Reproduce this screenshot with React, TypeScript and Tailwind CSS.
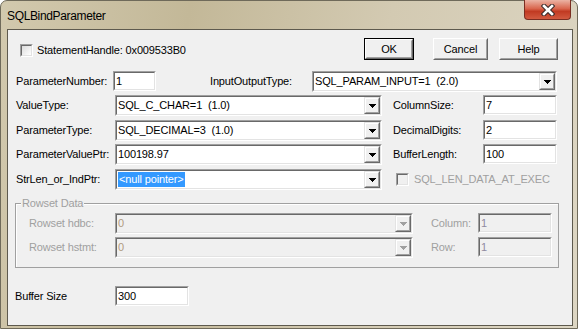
import React from "react";

const sunkenOuter = "border border-t-[#a0a0a0] border-l-[#a0a0a0] border-b-white border-r-white";
const sunkenInner = "border border-t-[#696969] border-l-[#696969] border-b-[#e3e3e3] border-r-[#e3e3e3]";

function Arrow(props: { disabled?: boolean }) {
  return (
    <svg width="7" height="4" viewBox="0 0 7 4" shapeRendering="crispEdges">
      <path d="M0 0h7v1H0zM1 1h5v1H1zM2 2h3v1H2zM3 3h1v1H3z" fill={props.disabled ? "#a0a0a0" : "#000"} />
    </svg>
  );
}

function Edit(props: { className: string; value: string; disabled?: boolean }) {
  return (
    <div className={`${props.className} shrink-0 ${sunkenOuter}`}>
      <div
        className={[
          "h-full flex items-center pl-[1px] whitespace-pre",
          sunkenInner,
          props.disabled ? "bg-[#f0f0f0] text-[#8f8ba0]" : "bg-white"
        ].join(" ")}
      >
        {props.value}
      </div>
    </div>
  );
}

function Combo(props: { className: string; value: string; disabled?: boolean; selected?: boolean }) {
  return (
    <div className={`${props.className} shrink-0 ${sunkenOuter}`}>
      <div className={`h-full flex ${sunkenInner} ${props.disabled ? "bg-[#f0f0f0]" : "bg-white"}`}>
        <div className={`flex-1 flex items-center pl-[1px] whitespace-pre ${props.disabled ? "text-[#b09a80]" : ""}`}>
          {props.selected ? (
            <span className="bg-[#3399ff] text-white h-[15px] leading-[15px] px-[1px]">{props.value}</span>
          ) : (
            props.value
          )}
        </div>
        <div className="w-[16px] h-full border border-t-[#e3e3e3] border-l-[#e3e3e3] border-b-[#696969] border-r-[#696969]">
          <div className="h-full flex items-center justify-center bg-[#f0f0f0] border border-t-white border-l-white border-b-[#a0a0a0] border-r-[#a0a0a0]">
            <Arrow disabled={props.disabled} />
          </div>
        </div>
      </div>
    </div>
  );
}

function CheckBox(props: { disabled?: boolean }) {
  return (
    <div className={`w-[13px] h-[13px] shrink-0 ${sunkenOuter}`}>
      <div className={`h-full ${sunkenInner} ${props.disabled ? "bg-[#f0f0f0]" : "bg-[linear-gradient(135deg,#dcdcdc,#fff)]"}`} />
    </div>
  );
}

function Button(props: { className: string; label: string; isDefault?: boolean }) {
  return (
    <div className={`${props.className} h-[22px] ${props.isDefault ? "border border-black" : ""}`}>
      <div className="h-full border border-t-white border-l-white border-b-[#696969] border-r-[#696969]">
        <div className="h-full flex items-center justify-center bg-[#f0f0f0] border border-t-[#f0f0f0] border-l-[#f0f0f0] border-b-[#a0a0a0] border-r-[#a0a0a0]">
          {props.label}
        </div>
      </div>
    </div>
  );
}

function CloseGlyph() {
  return (
    <svg width="14" height="12" viewBox="0 0 14 12">
      <path d="M3 2L11 10M11 2L3 10" stroke="#3b2b2a" strokeWidth="4.6" strokeLinecap="square" />
      <path d="M3 2L11 10M11 2L3 10" stroke="#ffffff" strokeWidth="2.6" strokeLinecap="square" />
    </svg>
  );
}

export default function App() {
  return (
    <div className="w-[578px] h-[329px] overflow-hidden font-['Liberation_Sans',Arial,sans-serif] text-[11px] tracking-[-0.15px] text-black">
      <div className="w-[578px] h-[329px] rounded-t-[7px] border border-[#6f6a5a] bg-[linear-gradient(100deg,#d2c9ae,#c3b898_30%,#d3cab2_62%,#ddd6c3)]">
        {/* title bar */}
        <div className="flex h-[28px]">
          <div className="pl-[6px] pt-[8px] text-[12px] tracking-[-0.35px] leading-[15px]">SQLBindParameter</div>
          <div className="ml-auto mr-[6px] -mt-px w-[47px] h-[20px] rounded-b-[4px] border border-t-0 border-[#7a2e22] bg-[linear-gradient(#ebb3a4,#d9664e_45%,#c13a22_60%,#d25a40)] flex items-center justify-center">
            <CloseGlyph />
          </div>
        </div>

        {/* client area */}
        <div className="ml-[6px] w-[566px] h-[297px] border border-[#5e5a4e] bg-[#f0f0f0]">
          <div className="flex pt-[8px]">
            <div className="flex items-center mt-[6px] ml-[12px] h-[13px]">
              <CheckBox />
              <span className="ml-[4px]">StatementHandle: 0x009533B0</span>
            </div>
            <div className="ml-auto mr-[14px] flex">
              <Button className="w-[50px]" label="OK" isDefault />
              <Button className="ml-[19px] w-[55px]" label="Cancel" />
              <Button className="ml-[11px] w-[59px]" label="Help" />
            </div>
          </div>

          <div className="flex items-start mt-[11px] ml-[8px] h-[21px]">
            <div className="w-[97px] h-[20px] flex items-center">ParameterNumber:</div>
            <Edit className="w-[43px] h-[20px]" value="1" />
            <div className="ml-[54px] w-[102px] h-[21px] flex items-center">InputOutputType:</div>
            <Combo className="w-[245px] h-[21px]" value="SQL_PARAM_INPUT=1  (2.0)" />
          </div>

          <div className="flex items-start mt-[3px] ml-[8px] h-[21px]">
            <div className="w-[99px] h-[21px] flex items-center">ValueType:</div>
            <Combo className="w-[267px] h-[21px]" value="SQL_C_CHAR=1  (1.0)" />
            <div className="ml-[11px] w-[90px] h-[20px] flex items-center">ColumnSize:</div>
            <Edit className="w-[74px] h-[20px]" value="7" />
          </div>

          <div className="flex items-start mt-[4px] ml-[8px] h-[21px]">
            <div className="w-[99px] h-[21px] flex items-center">ParameterType:</div>
            <Combo className="w-[267px] h-[21px]" value="SQL_DECIMAL=3  (1.0)" />
            <div className="ml-[11px] w-[90px] h-[20px] flex items-center">DecimalDigits:</div>
            <Edit className="w-[74px] h-[20px]" value="2" />
          </div>

          <div className="flex items-start mt-[3px] ml-[8px] h-[21px]">
            <div className="w-[99px] h-[21px] flex items-center">ParameterValuePtr:</div>
            <Combo className="w-[267px] h-[21px]" value="100198.97" />
            <div className="ml-[11px] w-[90px] h-[20px] flex items-center">BufferLength:</div>
            <Edit className="w-[74px] h-[20px]" value="100" />
          </div>

          <div className="flex items-center mt-[4px] ml-[8px] h-[21px]">
            <div className="w-[99px]">StrLen_or_IndPtr:</div>
            <Combo className="w-[267px] h-[21px]" value="<null pointer>" selected />
            <div className="ml-[14px]">
              <CheckBox disabled />
            </div>
            <span className="ml-[5px] text-[#a0a0a0]">SQL_LEN_DATA_AT_EXEC</span>
          </div>

          {/* Rowset Data group */}
          <div className="relative mt-[13px] ml-[7px] w-[544px] h-[65px] border border-[#a0a0a0] shadow-[inset_1px_1px_0_#ffffff]">
            <span className="absolute left-[5px] -top-[8px] px-[1px] bg-[#f0f0f0] leading-[14px] text-[#a0a0a0]">Rowset Data</span>
            <div className="flex items-start mt-[9px] ml-[13px] h-[21px]">
              <div className="w-[86px] h-[21px] flex items-center text-[#a0a0a0]">Rowset hdbc:</div>
              <Combo className="w-[298px] h-[21px]" value="0" disabled />
              <div className="ml-[18px] w-[47px] h-[20px] flex items-center text-[#a0a0a0]">Column:</div>
              <Edit className="w-[74px] h-[20px]" value="1" disabled />
            </div>
            <div className="flex items-start mt-[3px] ml-[13px] h-[21px]">
              <div className="w-[86px] h-[21px] flex items-center text-[#a0a0a0]">Rowset hstmt:</div>
              <Combo className="w-[298px] h-[21px]" value="0" disabled />
              <div className="ml-[18px] w-[47px] h-[20px] flex items-center text-[#a0a0a0]">Row:</div>
              <Edit className="w-[74px] h-[20px]" value="1" disabled />
            </div>
          </div>

          <div className="flex items-center mt-[18px] ml-[7px] h-[20px]">
            <div className="w-[100px]">Buffer Size</div>
            <Edit className="w-[74px] h-[20px]" value="300" />
          </div>
        </div>
      </div>
    </div>
  );
}
